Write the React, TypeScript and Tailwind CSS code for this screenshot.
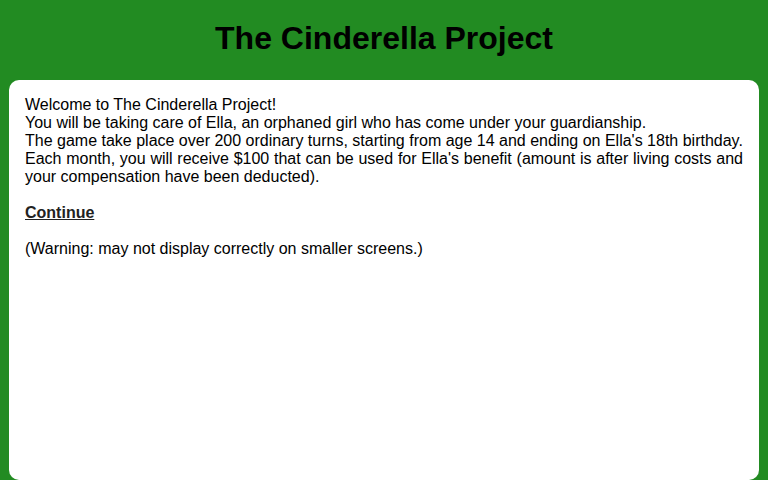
export default function App() {
  return (
    <div className="h-[480px] overflow-hidden bg-[#228b22] font-['Liberation_Sans',Arial,sans-serif] text-black">
      <div className="h-[80px] flex justify-center pt-[20px]">
        <h1 className="text-[32px] font-bold leading-[37px]">The Cinderella Project</h1>
      </div>
      <div className="mx-[9px] h-[400px] bg-white rounded-[10px] p-4 text-[16px] leading-[18px] text-justify">
        <p>
          Welcome to The Cinderella Project!
          <br />
          You will be taking care of Ella, an orphaned girl who has come under your guardianship.
          <br />
          The game take place over 200 ordinary turns, starting from age 14 and ending on Ella's 18th birthday.
          <br />
          Each month, you will receive $100 that can be used for Ella's benefit (amount is after living costs and
          your compensation have been deducted).
        </p>
        <p className="mt-[18px]">
          <a href="#" className="font-bold underline text-[#222]">
            Continue
          </a>
        </p>
        <p className="mt-[18px]">(Warning: may not display correctly on smaller screens.)</p>
      </div>
    </div>
  );
}
